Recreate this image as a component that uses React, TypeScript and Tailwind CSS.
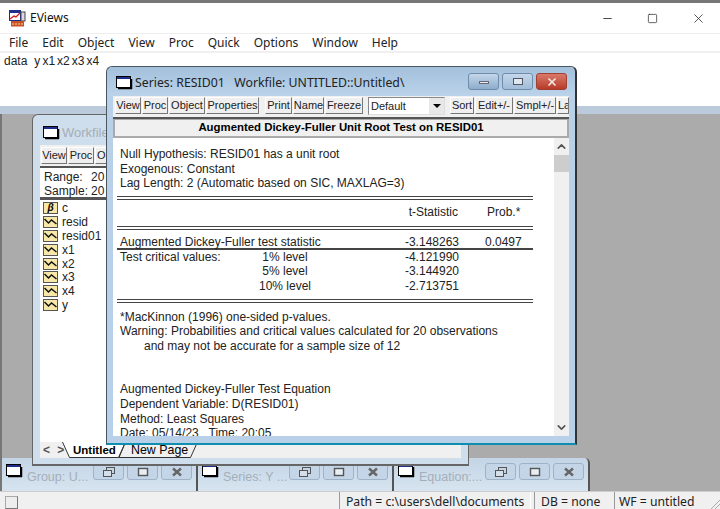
import { X, Minus, Square, ChevronUp, ChevronDown } from "lucide-react";

const font = { fontFamily: '"Liberation Sans", Arial, sans-serif' };
const noto = { fontFamily: '"Noto Sans", sans-serif' };

const WinIcon = ({ className = "" }: { className?: string }) => (
  <svg width="17" height="14" viewBox="0 0 17 14" className={className}>
    <rect x="0.5" y="0.5" width="14" height="11" fill="#fff" stroke="#000" />
    <rect x="1" y="1" width="13" height="2" fill="#1c2f8f" />
    <path d="M2 12.5h14M15.5 3v10" stroke="#000" strokeWidth="1.5" />
  </svg>
);

const SeriesIcon = () => (
  <svg width="15" height="12" viewBox="0 0 15 12" className="shrink-0">
    <rect x="0.5" y="0.5" width="14" height="11" fill="#f7e8a8" stroke="#555" />
    <path d="M1.5 3 5.5 7 8.5 4 13.5 8" fill="none" stroke="#111" strokeWidth="1.5" />
  </svg>
);

const CoefIcon = () => (
  <div className="w-[15px] h-[12px] shrink-0 border border-[#555] bg-[#f7e8a8] flex items-center justify-center text-[10px] leading-none font-bold italic text-black">
    β
  </div>
);

const AppLogo = () => (
  <svg width="17" height="17" viewBox="0 0 17 17" className="shrink-0">
    <rect x="0.5" y="0.5" width="11" height="10" fill="#fff" stroke="#1c2f8f" />
    <rect x="1" y="1" width="10" height="2" fill="#1c2f8f" />
    <path d="M1 9 5 6l2 1 4-4" stroke="#d02020" strokeWidth="1.4" fill="none" />
    <rect x="12" y="2" width="4" height="9" fill="#d8d8e8" stroke="#444" />
    <rect x="2" y="11" width="13" height="5.5" fill="#c9522a" />
    <path d="M4 13v2M7 13v2M10 13v2M13 13v2" stroke="#f2d590" />
  </svg>
);

const ToolBtn = ({ label, className = "" }: { label: string; className?: string }) => (
  <div className={`h-[17px] flex items-center justify-center shrink-0 bg-[#efefef] border border-t-white border-l-white border-r-[#777] border-b-[#777] text-[11px] leading-none text-[#222] overflow-hidden ${className}`}>
    {label}
  </div>
);

const CapBtn = ({ kind }: { kind: "restore" | "max" | "close" }) => (
  <div className="w-[31px] h-[17px] rounded-[3px] border border-[#9fb3c8] bg-[#c3d5e6] flex items-center justify-center">
    <svg width="14" height="10" viewBox="0 0 14 10">
      {kind === "restore" && (
        <>
          <rect x="4.5" y="0.5" width="8" height="6" fill="none" stroke="#555" />
          <rect x="1.5" y="3.5" width="8" height="6" fill="#d5dfe9" stroke="#555" />
        </>
      )}
      {kind === "max" && <rect x="2.5" y="1.5" width="9" height="7" fill="#e8eef4" stroke="#555" strokeWidth="1.4" />}
      {kind === "close" && <path d="M3 1.5 11 8.5M11 1.5 3 8.5" stroke="#666" strokeWidth="2.4" />}
    </svg>
  </div>
);

const Minimized = ({ title, className = "" }: { title: string; className?: string }) => (
  <div className={`h-[33px] flex shrink-0 items-start bg-gradient-to-b from-[#c3d5e6] to-[#d7e4f0] border-r-2 border-[#555] rounded-tr-[5px] pt-[5px] pl-[4px] pr-[4px] ${className}`}>
    <WinIcon className="mt-[1px] shrink-0" />
    <span className="ml-[4px] mt-[6px] flex-1 text-[12.5px] leading-[16px] text-[#a4aeb8] whitespace-nowrap">{title}</span>
    <div className="flex gap-[3px]">
      <CapBtn kind="restore" />
      <CapBtn kind="max" />
      <CapBtn kind="close" />
    </div>
  </div>
);

const Rule = ({ className = "" }: { className?: string }) => (
  <div className={`h-[4px] -ml-[3px] border-y border-[#444] ${className}`} />
);

export default function App() {
  const files: [string, boolean][] = [
    ["c", true],
    ["resid", false],
    ["resid01", false],
    ["x1", false],
    ["x2", false],
    ["x3", false],
    ["x4", false],
    ["y", false],
  ];

  return (
    <div className="w-[720px] h-[509px] relative overflow-hidden flex flex-col bg-white text-[#222]" style={font}>
      {/* main frame */}
      <div className="h-[3px] bg-[#777] shrink-0" />
      <div className="h-[30px] shrink-0 flex items-center pl-[9px]">
        <AppLogo />
        <span className="ml-[4px] text-[12px] text-[#111]" style={noto}>EViews</span>
        <div className="ml-auto flex items-center gap-[33px] pr-[14px] text-[#222]">
          <Minus size={13} strokeWidth={1.5} />
          <Square size={11} strokeWidth={1.5} />
          <X size={15} strokeWidth={1.2} />
        </div>
      </div>
      <div className="h-[18px] shrink-0 flex items-center gap-[14px] pl-[9px] border-t border-[#eee] text-[12px] text-[#222]" style={noto}>
        <span>File</span>
        <span>Edit</span>
        <span>Object</span>
        <span>View</span>
        <span>Proc</span>
        <span>Quick</span>
        <span>Options</span>
        <span>Window</span>
        <span>Help</span>
      </div>
      <div className="h-[55px] shrink-0 border-t-2 border-[#f0f0f0] pl-[4px] text-[12px] leading-[16px] text-[#222] flex items-start">
        <span>data</span>
        <span className="ml-[7px] [word-spacing:-1.3px]">y x1 x2 x3 x4</span>
      </div>
      <div className="h-[8px] shrink-0 bg-[#bccbdb]" />

      {/* mdi area */}
      <div className="flex-1 bg-[#ababab] border-l-2 border-[#777] flex flex-col justify-end">
        <div className="flex">
          <Minimized title="Group: U..." className="w-[196px]" />
          <Minimized title="Series: Y  ..." className="w-[196px]" />
          <Minimized title="Equation:..." className="w-[196px]" />
        </div>
      </div>

      {/* status bar */}
      <div className="h-[18px] shrink-0 bg-[#f0f0f0] border-t border-[#ccc] flex text-[#222]">
        <div className="ml-[5px] mt-[4px] w-[13px] h-[13px] border border-[#aaa] border-r-[#777] border-b-[#777] bg-[#eee]" />
        <div className="ml-auto flex h-full text-[12.2px] leading-[14px]" style={noto}>
          <div className="w-[192px] h-full pt-[3px] pl-[6px] border-l border-[#999] border-r border-r-white whitespace-nowrap overflow-hidden">Path = c:\users\dell\documents</div>
          <div className="ml-[3px] w-[77px] h-full pt-[3px] pl-[6px] border-l border-[#999] whitespace-nowrap">DB = none</div>
          <div className="ml-[3px] w-[89px] h-full pt-[3px] pl-[4px] border-l border-[#999] whitespace-nowrap">WF = untitled</div>
          <svg width="17" height="17" viewBox="0 0 17 17">
            <path d="M8 17 17 8M12 17 17 12" stroke="#aaa" />
          </svg>
        </div>
      </div>

      {/* workfile window */}
      <div className="absolute left-[32px] top-[114px] w-[437px] h-[352px] bg-[#cfdeec] border border-[#666] border-b-2 rounded-t-[6px] flex flex-col px-[7px] pb-[6px]">
        <div className="h-[30px] flex items-center shrink-0 pl-[3px] pt-[5px]">
          <WinIcon />
          <span className="ml-[2px] text-[13px] text-[#a4aeb8] whitespace-nowrap">Workfile</span>
        </div>
        <div className="flex-1 bg-white flex flex-col overflow-hidden min-h-0">
          <div className="h-[21px] bg-[#f0f0f0] flex gap-px items-center pl-px shrink-0">
            <ToolBtn label="View" className="w-[26px]" />
            <ToolBtn label="Proc" className="w-[26px]" />
            <ToolBtn label="Object" className="w-[36px]" />
          </div>
          <div className="h-[2px] bg-[#555] shrink-0" />
          <div className="h-[32px] shrink-0 text-[12px] leading-[14px] pl-[4px] pt-[2px] border-b-[3px] border-[#555]">
            <div className="flex"><span className="w-[47px]">Range:</span><span>20</span></div>
            <div className="flex"><span className="w-[47px]">Sample:</span><span>20</span></div>
          </div>
          <div className="flex-1 pt-px pl-[3px]">
            {files.map(([name, coef]) => (
              <div key={name} className="h-[13.9px] flex items-center gap-[4px] text-[12px] leading-none">
                {coef ? <CoefIcon /> : <SeriesIcon />}
                <span>{name}</span>
              </div>
            ))}
          </div>
          <div className="h-[16px] shrink-0 bg-[#f0f0f0] flex items-center relative">
            <span className="pl-[3px] text-[#555] font-bold text-[12px] leading-none tracking-[2px]">&lt; &gt;</span>
            {/* page tabs */}
            <svg width="150" height="16" viewBox="0 0 150 16" className="absolute left-[22px] top-0">
              <path d="M0.5 0 7.5 15.5H56.5L63.5 0" fill="#fff" stroke="#333" />
              <path d="M57 15.5H128.5L135.5 0M57 15.5 63.5 0" fill="none" stroke="#333" />
            </svg>
            <span className="absolute left-[33px] top-[1px] text-[11.5px] leading-[15px] font-bold text-black">Untitled</span>
            <span className="absolute left-[91px] top-[1px] text-[12.4px] leading-[15px] text-black">New Page</span>
          </div>
        </div>
      </div>

      {/* series window */}
      <div className="absolute left-[106px] top-[66px] w-[471px] h-[379px] bg-[#b9d1e8] border border-[#4a5560] border-b-2 border-b-[#0f8fb0] border-r-2 border-r-[#333] rounded-t-[6px] flex flex-col px-[6px] pb-[7px]">
        <div className="h-[29px] shrink-0 flex items-center bg-gradient-to-b from-[#a3c0dc] to-[#bbd3ea] -mx-[6px] pl-[9px] pr-[8px] rounded-t-[6px]">
          <WinIcon className="mt-[2px]" />
          <span className="ml-[2px] mt-[3px] text-[12.3px] text-[#222] whitespace-pre" style={noto}>Series: RESID01   Workfile: UNTITLED::Untitled\</span>
          <div className="ml-auto flex gap-[3px]">
            <div className="w-[31px] h-[17px] rounded-[3px] border border-[#6f8cab] bg-gradient-to-b from-[#c5d7ea] to-[#8daccb] flex items-center justify-center"><div className="w-[10px] h-[3px] bg-[#e8eef4] border border-[#667] mt-[2px]" /></div>
            <div className="w-[31px] h-[17px] rounded-[3px] border border-[#6f8cab] bg-gradient-to-b from-[#c5d7ea] to-[#a0bcd8] flex items-center justify-center"><div className="w-[10px] h-[7px] bg-[#dfe8f1] border border-[#556]" /></div>
            <div className="w-[31px] h-[17px] rounded-[3px] border border-[#a04030] bg-gradient-to-b from-[#d9796a] to-[#b83a28] flex items-center justify-center"><X size={12} strokeWidth={3.5} className="text-[#f3e4e0]" /></div>
          </div>
        </div>
        <div className="flex-1 min-h-0 flex flex-col bg-white">
          <div className="h-[21px] shrink-0 bg-[#f0f0f0] flex items-start pt-[1px] pl-[2px] overflow-hidden">
            <div className="flex gap-px">
              <ToolBtn label="View" className="w-[26px]" />
              <ToolBtn label="Proc" className="w-[26px]" />
              <ToolBtn label="Object" className="w-[36px]" />
              <ToolBtn label="Properties" className="w-[53px]" />
            </div>
            <div className="flex gap-px ml-[6px]">
              <ToolBtn label="Print" className="w-[27px]" />
              <ToolBtn label="Name" className="w-[31px]" />
              <ToolBtn label="Freeze" className="w-[38px]" />
            </div>
            <div className="ml-[5px] w-[77px] h-[18px] bg-white border border-[#888] border-b-[#ddd] border-r-[#ddd] flex items-center pl-[2px] text-[11px] shrink-0">
              Default
              <div className="ml-auto w-[16px] h-full bg-[#e8e8e8] border-l border-white flex items-center justify-center">
                <div className="w-0 h-0 border-x-[4px] border-x-transparent border-t-[4px] border-t-black" />
              </div>
            </div>
            <div className="flex gap-px ml-[5px]">
              <ToolBtn label="Sort" className="w-[24px]" />
              <ToolBtn label="Edit+/-" className="w-[38px]" />
              <ToolBtn label="Smpl+/-" className="w-[42px]" />
              <ToolBtn label="La" className="w-[12px] !justify-start" />
            </div>
          </div>
          <div className="h-[2px] shrink-0 bg-[#555]" />
          <div className="h-[18px] shrink-0 bg-[#f0f0f0] border-y border-x-2 border-[#aaa] flex items-center justify-center text-[11.4px] font-bold text-black leading-none">
            Augmented Dickey-Fuller Unit Root Test on RESID01
          </div>
          <div className="flex-1 min-h-0 flex border-t border-[#aaa]">
            <div className="flex-1 overflow-hidden pl-[7px] pr-[21px] pt-[9px] text-[12px] leading-[14.6px] text-[#222]">
              <div>Null Hypothesis: RESID01 has a unit root</div>
              <div>Exogenous: Constant</div>
              <div>Lag Length: 2 (Automatic based on SIC, MAXLAG=3)</div>
              <Rule className="mt-[5px]" />
              <div className="grid grid-cols-[277px_61px_1fr] mt-[5px] h-[15px]">
                <div />
                <div className="text-right">t-Statistic</div>
                <div className="pl-[29px]">Prob.*</div>
              </div>
              <Rule className="mt-[6px]" />
              <div className="grid grid-cols-[277px_62px_1fr] mt-[5px] h-[13px] -ml-[3px] pl-[3px] border-b-[2px] border-[#444] box-content">
                <div>Augmented Dickey-Fuller test statistic</div>
                <div className="text-right">-3.148263</div>
                <div className="pl-[26px]">0.0497</div>
              </div>
              {[
                ["Test critical values:", "1% level", "-4.121990"],
                ["", "5% level", "-3.144920"],
                ["", "10% level", "-2.713751"],
              ].map(([a, b, c]) => (
                <div key={b} className="grid grid-cols-[135px_60px_82px_62px]">
                  <div>{a}</div>
                  <div className="text-center">{b}</div>
                  <div />
                  <div className="text-right">{c}</div>
                </div>
              ))}
              <Rule className="mt-[5px]" />
              <div className="mt-[7px]">*MacKinnon (1996) one-sided p-values.</div>
              <div>Warning: Probabilities and critical values calculated for 20 observations</div>
              <div className="pl-[24px]">and may not be accurate for a sample size of 12</div>
              <div className="mt-[29px]">Augmented Dickey-Fuller Test Equation</div>
              <div>Dependent Variable: D(RESID01)</div>
              <div>Method: Least Squares</div>
              <div>Date: 05/14/23&nbsp;&nbsp; Time: 20:05</div>
            </div>
            <div className="w-[15px] shrink-0 bg-[#f0f0f0] flex flex-col items-center">
              <ChevronUp size={13} strokeWidth={3} className="text-[#555] h-[17px]" />
              <div className="w-full h-[17px] bg-[#cdcdcd]" />
              <ChevronDown size={13} strokeWidth={3} className="text-[#555] h-[17px] mt-auto" />
            </div>
          </div>
        </div>
      </div>
    </div>
  );
}
